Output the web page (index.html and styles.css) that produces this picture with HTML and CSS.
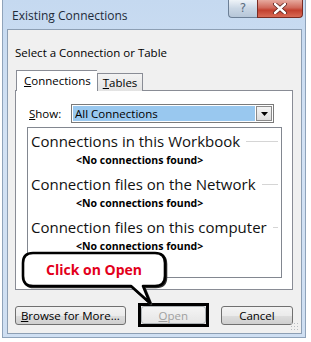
FILE: index.html
```html
<!DOCTYPE html>
<html lang="en">
<head>
    <meta charset="UTF-8">
    <title>Existing Connections</title>
    <link rel="stylesheet" href="styles.css">
</head>
<body>
    <div class="window">
        <div class="titlebar">
            <span class="title">Existing Connections</span>
            <div class="caption_btns">
                <div class="help">?</div>
                <div class="close">
                    <svg width="16" height="11" viewBox="0 0 16 11">
                        <path d="M3,1 L13,10 M13,1 L3,10" stroke="#5a1f19" stroke-width="4" stroke-linecap="round"/>
                        <path d="M3,1 L13,10 M13,1 L3,10" stroke="#fff" stroke-width="2.4" stroke-linecap="round"/>
                    </svg>
                </div>
            </div>
        </div>
        <div class="panel">
            <div class="intro">Select a Connection or Table</div>
            <div class="tabs">
                <div class="tab active"><u>C</u>onnections</div>
                <div class="tab"><u>T</u>ables</div>
            </div>
            <div class="tab_body">
                <div class="show_row">
                    <span class="show_label"><u>S</u>how:</span>
                    <div class="select">
                        <span class="select_val">All Connections</span>
                        <span class="select_btn">
                            <svg width="7" height="4" viewBox="0 0 7 4"><path d="M0,0 H7 L3.5,4 Z" fill="#000"/></svg>
                        </span>
                    </div>
                </div>
                <div class="listbox">
                    <div class="group">Connections in this Workbook</div>
                    <div class="none">&lt;No connections found&gt;</div>
                    <div class="group">Connection files on the Network</div>
                    <div class="none">&lt;No connections found&gt;</div>
                    <div class="group">Connection files on this computer</div>
                    <div class="none">&lt;No connections found&gt;</div>
                </div>
            </div>
            <div class="buttons">
                <div class="btn browse"><u>B</u>rowse for More...</div>
                <div class="open_mark">
                    <div class="btn disabled"><u>O</u>pen</div>
                </div>
                <div class="btn cancel">Cancel</div>
            </div>
            <div class="grip"></div>
        </div>
    </div>

    <!-- 标注气泡 -->
    <div class="callout">
        <svg class="callout_shape" width="150" height="56" viewBox="0 0 150 56">
            <path d="M12,2 H134 Q144,2 144,12 V25 Q144,35 134,35 H122 L129,52 L110,35 H12 Q2,35 2,25 V12 Q2,2 12,2 Z"
                  fill="#fff" stroke="#000" stroke-width="2.6" stroke-linejoin="round"/>
        </svg>
        <span class="callout_text">Click on Open</span>
    </div>
</body>
</html>
```

FILE: styles.css
```css
body{
    margin: 0;
    padding: 0;
    background-color: #fff;
    font-family: 'Open Sans', 'Noto Sans', sans-serif;
    font-size: 11.5px;
    color: #000;
}
u{
    text-decoration: underline;
    text-underline-offset: 1px;
}
.window{
    width: 304px;
    height: 338px;
    margin-left: 2px;
    border: 1px solid #8fa3ba;
    border-top: 0;
    background: linear-gradient(#c5d9f0, #d3e2f4 40%, #cfdff2);
    padding: 0 3px 0 4px;
    box-sizing: border-box;
    display: flex;
    flex-direction: column;
}
.titlebar{
    height: 29px;
    display: flex;
    align-items: flex-start;
}
.title{
    margin: 7px 0 0 5px;
    font-size: 12px;
    color: #1e2b3a;
}
.caption_btns{
    margin-left: auto;
    margin-right: -1px;
    display: flex;
}
.help{
    width: 29px;
    height: 18px;
    box-sizing: border-box;
    border: 1px solid #6c7f96;
    border-top: 0;
    border-right: 0;
    border-radius: 0 0 0 4px;
    background: linear-gradient(#eef3f8, #c9d6e4 50%, #b6c6d8);
    color: #5b6b7e;
    font-family: 'DejaVu Sans', sans-serif;
    font-size: 12px;
    line-height: 16px;
    text-align: center;
}
.close{
    width: 46px;
    height: 18px;
    box-sizing: border-box;
    border: 1px solid #7a2b22;
    border-top: 0;
    border-radius: 0 0 4px 0;
    background: linear-gradient(#e7aa9f, #d06a5c 45%, #c2402f 60%, #d86a55);
    display: flex;
    align-items: center;
    justify-content: center;
}
.panel{
    flex: 1;
    margin-bottom: 3px;
    border: 1px solid #8d9fb4;
    background-color: #f0f0f0;
    padding: 0 8px 0 7px;
    position: relative;
}
.intro{
    margin-top: 15px;
    line-height: 15px;
}
.tabs{
    display: flex;
    align-items: flex-end;
    margin-top: 10px;
    margin-left: 1px;
    position: relative;
    z-index: 1;
    margin-bottom: -1px;
}
.tab{
    height: 17px;
    line-height: 17px;
    padding: 0 5px;
    border: 1px solid #898c95;
    border-bottom: 0;
    background: linear-gradient(#f3f3f3, #e3e3e3);
}
.tab.active{
    height: 20px;
    line-height: 20px;
    padding: 0 6px 0 7px;
    background: #fff;
    border-right: 0;
}
.tab_body{
    height: 200px;
    box-sizing: border-box;
    border: 1px solid #898c95;
    background-color: #fff;
    padding: 13px 10px 0 11px;
}
.show_row{
    display: flex;
    align-items: center;
    height: 19px;
}
.show_label{
    width: 42px;
    margin-left: 2px;
}
.select{
    width: 203px;
    height: 19px;
    box-sizing: border-box;
    border: 1px solid #7a7a7a;
    display: flex;
    padding: 1px;
}
.select_val{
    flex: 1;
    background-color: #99c8ef;
    line-height: 15px;
    padding-left: 2px;
}
.select_btn{
    width: 16px;
    margin-left: 1px;
    box-sizing: border-box;
    border: 1px solid #8a8a8a;
    background: linear-gradient(#f4f4f4, #dcdcdc);
    display: flex;
    align-items: center;
    justify-content: center;
}
.listbox{
    margin-top: 4px;
    height: 151px;
    box-sizing: border-box;
    border: 1px solid #828790;
    padding: 2px 3px 0 3px;
}
.group{
    display: flex;
    align-items: center;
    font-size: 15px;
    line-height: 22px;
    color: #111;
}
.group::after{
    content: '';
    flex: 1;
    height: 1px;
    margin: 1px 0 0 6px;
    background-color: #d5d5d5;
}
.none{
    font-size: 10.5px;
    font-weight: bold;
    line-height: 12px;
    margin: 2px 0 7px 45px;
}
.buttons{
    display: flex;
    align-items: center;
    margin-top: 13px;
}
.btn{
    height: 19px;
    box-sizing: border-box;
    border: 1px solid #707070;
    border-radius: 3px;
    background: linear-gradient(#f3f3f3, #ebebeb 50%, #dddddd 51%, #cfcfcf);
    line-height: 17px;
    text-align: center;
}
.browse{
    width: 112px;
}
.open_mark{
    margin-left: 12px;
    width: 72px;
    height: 24px;
    box-sizing: border-box;
    border: 3px solid #000;
}
.disabled{
    height: 18px;
    border-color: #adb2b5;
    color: #a0a0a0;
    background: linear-gradient(#f4f4f4, #e6e6e6);
}
.cancel{
    width: 73px;
    margin-left: 12px;
}
.grip{
    position: absolute;
    right: 1px;
    bottom: 1px;
    width: 10px;
    height: 10px;
    background-image: radial-gradient(#b9bdc2 35%, transparent 40%);
    background-size: 3px 3px;
}
.callout{
    position: absolute;
    left: 21px;
    top: 251px;
    width: 150px;
    height: 56px;
}
.callout_shape{
    position: absolute;
    left: 0;
    top: 0;
    filter: drop-shadow(1px 1px 0 #333);
}
.callout_text{
    position: absolute;
    left: 2px;
    top: 2px;
    width: 142px;
    height: 33px;
    line-height: 33px;
    text-align: center;
    color: #e3001b;
    font-weight: bold;
    font-size: 14px;
}
```
